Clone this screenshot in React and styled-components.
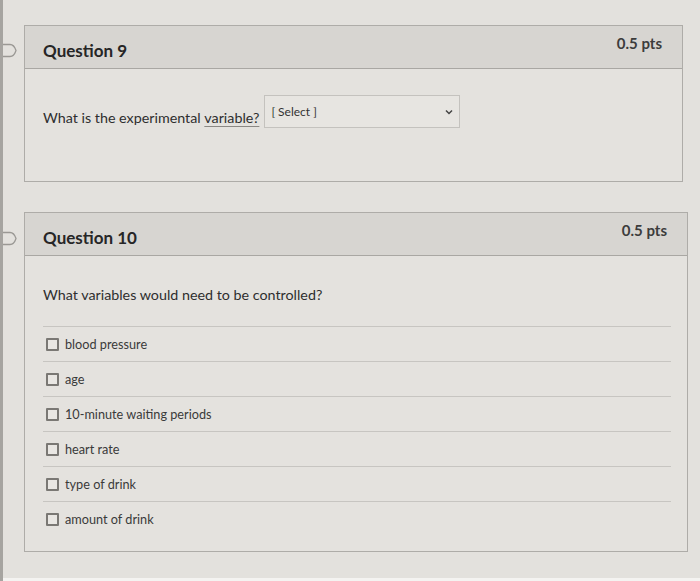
import React from 'react';
import styled, { createGlobalStyle } from 'styled-components';

const GlobalStyle = createGlobalStyle`
  html, body {
    margin: 0;
    padding: 0;
    background: #e3e1dd;
    font-family: Lato, "Open Sans", "Liberation Sans", sans-serif;
  }
`;

const Page = styled.div`
  width: 700px;
  height: 581px;
  box-sizing: border-box;
  display: flex;
  flex-direction: column;
  gap: 30px;
  padding-top: 25px;
  border-left: 3px solid #a6a4a0;
  background: #e3e1dd;
  overflow: hidden;
  position: relative;
`;

const QuestionRow = styled.div`
  display: flex;
  align-items: flex-start;
`;

const Gutter = styled.div`
  width: 24px;
  flex-shrink: 0;
  padding-top: ${p => p.offset}px;
  margin-left: -3px;
  line-height: 0;
`;

const Card = styled.div`
  width: ${p => p.width}px;
  border: 1px solid #aeaca8;
  background: #e4e2de;
  box-sizing: border-box;
`;

const Header = styled.div`
  height: 42px;
  display: flex;
  align-items: center;
  justify-content: space-between;
  padding: 0 20px 0 18px;
  background: #d7d5d1;
  border-bottom: 1px solid #a9a7a3;
`;

const Title = styled.h2`
  margin: 6px 0 0;
  font-size: 17px;
  font-weight: 700;
  color: #262626;
`;

const Points = styled.span`
  margin-top: -8px;
  font-size: 15px;
  font-weight: 700;
  color: #3c3c3c;
`;

const Body = styled.div`
  padding: ${p => p.pad};
  min-height: ${p => p.minH}px;
  box-sizing: border-box;
`;

const Prompt = styled.div`
  display: flex;
  align-items: center;
  font-size: 14.3px;
  color: #2e2e2e;
`;

const Underlined = styled.span`
  text-decoration: underline;
  text-decoration-color: #8a8884;
  text-underline-offset: 3px;
`;

const SelectBox = styled.div`
  margin-left: 5px;
  width: 196px;
  height: 33px;
  box-sizing: border-box;
  border: 1px solid #c4c2be;
  background: #e7e5e1;
  display: flex;
  align-items: center;
  justify-content: space-between;
  padding: 0 6px 0 6px;
  margin-top: -12px;
  font-size: 12px;
  color: #333;
`;

const OptionList = styled.div`
  margin-top: 23px;
  margin-right: 16px;
  border-top: 1px solid #c7c5c1;
`;

const Option = styled.label`
  height: 34px;
  display: flex;
  align-items: center;
  gap: 6px;
  padding-left: 3px;
  font-size: 12.7px;
  color: #3a3a3a;
  border-bottom: ${p => (p.last ? 'none' : '1px solid #c7c5c1')};
`;

const Box = styled.span`
  width: 9px;
  height: 9px;
  border: 2px solid #7a7874;
  background: #e9e7e3;
  border-radius: 1px;
  flex-shrink: 0;
`;

const BottomStrip = styled.div`
  position: absolute;
  left: -3px;
  right: 0;
  bottom: 0;
  height: 3px;
  background: #f4f3f1;
`;

function Flag() {
  return (
    <svg width="18" height="15" viewBox="0 0 18 15">
      <path
        d="M-1 1.5 H10 Q14 1.5 16 7.5 Q14 13.5 10 13.5 H-1"
        fill="#e3e1dd"
        stroke="#9a9894"
        strokeWidth="1.3"
      />
    </svg>
  );
}

function Chevron() {
  return (
    <svg width="8" height="6" viewBox="0 0 8 6">
      <path d="M1 1.5 L4 4.5 L7 1.5" fill="none" stroke="#444" strokeWidth="1.5" />
    </svg>
  );
}

const options = [
  'blood pressure',
  'age',
  '10-minute waiting periods',
  'heart rate',
  'type of drink',
  'amount of drink',
];

export default function App() {
  return (
    <>
      <GlobalStyle />
      <Page>
        <QuestionRow>
          <Gutter offset={18}>
            <Flag />
          </Gutter>
          <Card width={659}>
            <Header>
              <Title>Question 9</Title>
              <Points>0.5 pts</Points>
            </Header>
            <Body pad="38px 18px 0" minH={112}>
              <Prompt>
                What is the experimental&nbsp;<Underlined>variable?</Underlined>
                <SelectBox>
                  <span>[ Select ]</span>
                  <Chevron />
                </SelectBox>
              </Prompt>
            </Body>
          </Card>
        </QuestionRow>

        <QuestionRow>
          <Gutter offset={19}>
            <Flag />
          </Gutter>
          <Card width={664}>
            <Header>
              <Title>Question 10</Title>
              <Points>0.5 pts</Points>
            </Header>
            <Body pad="30px 0 0 18px" minH={295}>
              <Prompt>What variables would need to be controlled?</Prompt>
              <OptionList>
                {options.map((o, i) => (
                  <Option key={o} last={i === options.length - 1}>
                    <Box />
                    {o}
                  </Option>
                ))}
              </OptionList>
            </Body>
          </Card>
        </QuestionRow>
        <BottomStrip />
      </Page>
    </>
  );
}
